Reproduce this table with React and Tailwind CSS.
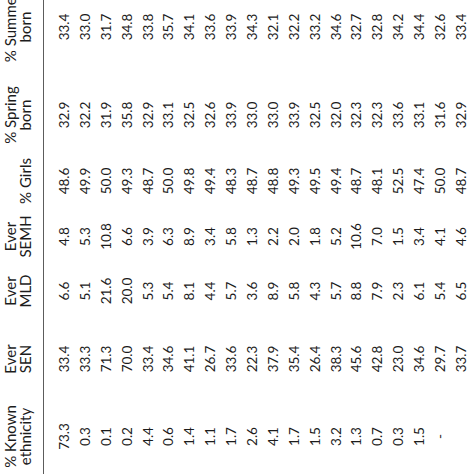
import React from "react";

const headers = [
  ["% Known", "ethnicity"],
  ["Ever", "SEN"],
  ["Ever", "MLD"],
  ["Ever", "SEMH"],
  ["", "% Girls"],
  ["% Spring", "born"],
  ["% Summer", "born"],
];

const rows = [
  ["73.3", "33.4", "6.6", "4.8", "48.6", "32.9", "33.4"],
  ["0.3", "33.3", "5.1", "5.3", "49.9", "32.2", "33.0"],
  ["0.1", "71.3", "21.6", "10.8", "50.0", "31.9", "31.7"],
  ["0.2", "70.0", "20.0", "6.6", "49.3", "35.8", "34.8"],
  ["4.4", "33.4", "5.3", "3.9", "48.7", "32.9", "33.8"],
  ["0.6", "34.6", "5.4", "6.3", "50.0", "33.1", "35.7"],
  ["1.4", "41.1", "8.1", "8.9", "49.8", "32.5", "34.1"],
  ["1.1", "26.7", "4.4", "3.4", "49.4", "32.6", "33.6"],
  ["1.7", "33.6", "5.7", "5.8", "48.3", "33.9", "33.9"],
  ["2.6", "22.3", "3.6", "1.3", "48.7", "33.0", "34.3"],
  ["4.1", "37.9", "8.9", "2.2", "48.8", "33.0", "32.1"],
  ["1.7", "35.4", "5.8", "2.0", "49.3", "33.9", "32.2"],
  ["1.5", "26.4", "4.3", "1.8", "49.5", "32.5", "33.2"],
  ["3.2", "38.3", "5.7", "5.2", "49.4", "32.0", "34.6"],
  ["1.3", "45.6", "8.8", "10.6", "48.7", "32.3", "32.7"],
  ["0.7", "42.8", "7.9", "7.0", "48.1", "32.3", "32.8"],
  ["0.3", "23.0", "2.3", "1.5", "52.5", "33.6", "34.2"],
  ["1.5", "34.6", "6.1", "3.4", "47.4", "33.1", "34.4"],
  ["-", "29.7", "5.4", "4.1", "50.0", "31.6", "32.6"],
  ["", "33.7", "6.5", "4.6", "48.7", "32.9", "33.4"],
];

export default function App() {
  return (
    <div className="w-[474px] h-[474px] overflow-hidden bg-white">
      <div
        className="w-[474px] h-[474px] -rotate-90 overflow-hidden bg-white text-[#1c1c1c]"
        style={{ fontFamily: "Lato, 'Open Sans', sans-serif" }}
      >
        <div className="w-[498px]">
          <div className="grid grid-cols-[75px_80px_56px_53px_58px_74px_102px] h-[44px] border-b-[1.5px] border-[#5c5c5c] items-end pb-[10px] text-[15px] leading-[15px]">
            {headers.map((h, i) => (
              <div key={i} className="flex flex-col items-center whitespace-nowrap">
                <span>{h[0] || "\u00a0"}</span>
                <span>{h[1]}</span>
              </div>
            ))}
          </div>
          <div className="pt-[10px] text-[13.5px]">
            {rows.map((r, i) => (
              <div
                key={i}
                className="grid grid-cols-[75px_80px_56px_53px_58px_74px_102px] h-[20.9px] leading-[20.9px]"
              >
                {r.map((c, j) => (
                  <div key={j} className="text-center whitespace-nowrap">
                    {c}
                  </div>
                ))}
              </div>
            ))}
          </div>
        </div>
      </div>
    </div>
  );
}
